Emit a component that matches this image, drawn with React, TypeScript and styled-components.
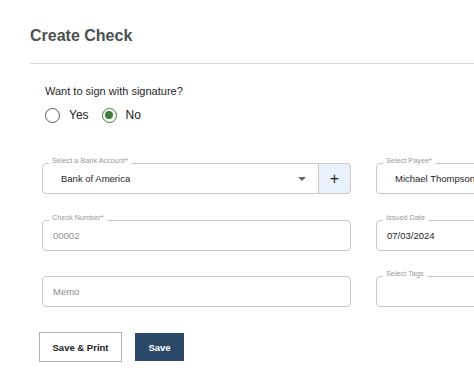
import React from 'react';
import styled, { createGlobalStyle } from 'styled-components';

const GlobalStyle = createGlobalStyle`
  html, body {
    margin: 0;
    padding: 0;
    overflow: hidden;
    background: #ffffff;
  }
  body {
    font-family: 'Liberation Sans', Arial, sans-serif;
    color: #222222;
  }
`;

const FIELDS = [
  { label: 'Select a Bank Account*', value: 'Bank of America', kind: 'bank' },
  { label: 'Select Payee*', value: 'Michael Thompson', kind: 'select' },
  { label: 'Check Number*', value: '00002', kind: 'disabled' },
  { label: 'Issued Date', value: '07/03/2024', kind: 'input' },
  { label: '', value: 'Memo', kind: 'placeholder' },
  { label: 'Select Tags', value: '', kind: 'select' },
];

const App: React.FC = () => {
  return (
    <Page>
      <GlobalStyle />
      <Title>Create Check</Title>
      <Divider />
      <Question>
        <QuestionText>Want to sign with signature?</QuestionText>
        <RadioRow>
          <RadioOption>
            <RadioCircle $checked={false} />
            <RadioLabel>Yes</RadioLabel>
          </RadioOption>
          <RadioOption>
            <RadioCircle $checked />
            <RadioLabel>No</RadioLabel>
          </RadioOption>
        </RadioRow>
      </Question>
      <FieldGrid>
        {FIELDS.map((f) => (
          <Field key={f.label + f.value}>
            {f.label && <FloatLabel>{f.label}</FloatLabel>}
            <FieldValue
              $indent={f.kind === 'bank' || (f.kind === 'select' && f.value !== '')}
              $muted={f.kind === 'disabled' || f.kind === 'placeholder'}
            >
              {f.value}
            </FieldValue>
            {f.kind === 'bank' && (
              <>
                <Arrow />
                <AddButton>+</AddButton>
              </>
            )}
          </Field>
        ))}
      </FieldGrid>
      <Actions>
        <Button $primary={false}>Save &amp; Print</Button>
        <Button $primary>Save</Button>
      </Actions>
    </Page>
  );
};

export default App;

const Page = styled.div`
  width: 474px;
  height: 379px;
  overflow: hidden;
  padding: 26px 0 0 30px;
  box-sizing: border-box;
`;

const Title = styled.div`
  font-size: 16px;
  line-height: 20px;
  font-weight: 700;
  color: #4b5150;
`;

const Divider = styled.div`
  margin-top: 17px;
  height: 1px;
  background: #dadada;
  width: 460px;
`;

const Question = styled.div`
  padding-left: 15px;
  margin-top: 20px;
`;

const QuestionText = styled.div`
  font-size: 11px;
  line-height: 14px;
  color: #1f1f1f;
`;

const RadioRow = styled.div`
  display: flex;
  align-items: center;
  gap: 13px;
  margin-top: 9px;
  height: 16px;
`;

const RadioOption = styled.label`
  display: flex;
  align-items: center;
  gap: 9px;
`;

const RadioCircle = styled.span<{ $checked: boolean }>`
  width: 15px;
  height: 15px;
  box-sizing: border-box;
  border-radius: 50%;
  border: 1.5px solid ${(p) => (p.$checked ? '#3f7d3b' : '#5a5a5a')};
  display: flex;
  align-items: center;
  justify-content: center;

  &::after {
    content: '';
    display: ${(p) => (p.$checked ? 'block' : 'none')};
    width: 8px;
    height: 8px;
    border-radius: 50%;
    background: #3f7d3b;
  }
`;

const RadioLabel = styled.span`
  font-size: 12px;
  color: #222222;
`;

const FieldGrid = styled.div`
  display: grid;
  grid-template-columns: 309px 309px;
  column-gap: 25px;
  row-gap: 25.5px;
  margin: 40px 0 0 12px;
`;

const Field = styled.div`
  position: relative;
  height: 31px;
  box-sizing: border-box;
  border: 1px solid #cacaca;
  border-radius: 4px;
  display: flex;
  align-items: center;
`;

const FloatLabel = styled.span`
  position: absolute;
  top: -7px;
  left: 6px;
  padding: 0 3px;
  background: #ffffff;
  font-size: 7.3px;
  line-height: 8px;
  color: #9a9a9a;
  white-space: nowrap;
`;

const FieldValue = styled.span<{ $indent: boolean; $muted: boolean }>`
  flex: 1;
  padding-left: ${(p) => (p.$indent ? '18px' : '10px')};
  font-size: 9.5px;
  color: ${(p) => (p.$muted ? '#8c8c8c' : '#1e1e1e')};
  white-space: nowrap;
`;

const Arrow = styled.span`
  width: 0;
  height: 0;
  border-left: 4px solid transparent;
  border-right: 4px solid transparent;
  border-top: 4px solid #666666;
  margin-right: 12px;
`;

const AddButton = styled.span`
  width: 31px;
  align-self: stretch;
  margin: -1px -1px -1px 0;
  border: 1px solid #cacaca;
  border-radius: 0 4px 4px 0;
  background: #e9f1fc;
  display: flex;
  align-items: center;
  justify-content: center;
  font-size: 16px;
  font-weight: 400;
  color: #1a1a1a;
`;

const Actions = styled.div`
  display: flex;
  align-items: center;
  gap: 13px;
  margin: 25px 0 0 9px;
`;

const Button = styled.button<{ $primary: boolean }>`
  font-family: 'Liberation Sans', Arial, sans-serif;
  font-size: 9.5px;
  font-weight: 700;
  box-sizing: border-box;
  height: ${(p) => (p.$primary ? '28px' : '30px')};
  width: ${(p) => (p.$primary ? '49px' : '83px')};
  padding: 0;
  border: 1px solid ${(p) => (p.$primary ? '#2b4869' : '#b3b3b3')};
  background: ${(p) => (p.$primary ? '#2b4869' : '#ffffff')};
  color: ${(p) => (p.$primary ? '#ffffff' : '#222222')};
  border-radius: 0;
`;
